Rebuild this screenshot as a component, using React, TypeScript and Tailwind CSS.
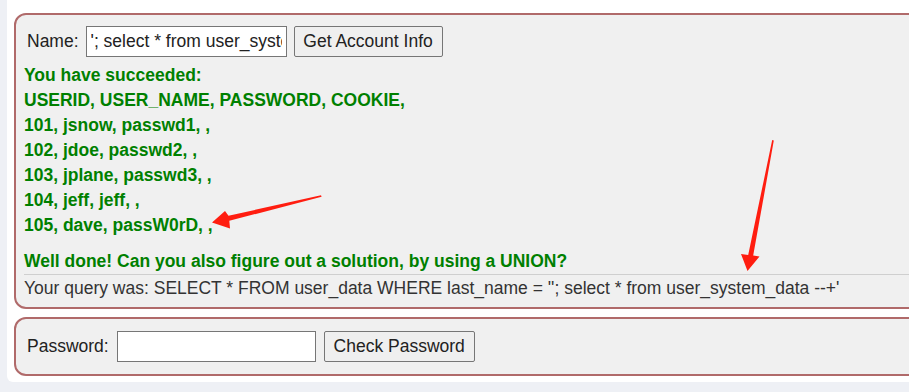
import React from 'react';

const rows = [
  'USERID, USER_NAME, PASSWORD, COOKIE,',
  '101, jsnow, passwd1, ,',
  '102, jdoe, passwd2, ,',
  '103, jplane, passwd3, ,',
  '104, jeff, jeff, ,',
  '105, dave, passW0rD, ,',
];

function Arrows() {
  return (
    <svg
      className="pointer-events-none absolute left-0 top-0"
      width={909}
      height={392}
      viewBox="0 0 909 392"
    >
      <polygon
        fill="#ff1d10"
        points="321,195.2 228.5,215.8 225,211 212,222.5 230,228.5 229.3,220.8 321.6,196.8"
      />
      <polygon
        fill="#ff1d10"
        points="772.2,140 773.8,140.4 753.2,255.6 759.5,256.5 747.5,271 741,254 748.2,255"
      />
    </svg>
  );
}

export default function App() {
  return (
    <div className="relative h-[392px] w-[909px] overflow-hidden bg-[#eef0f5] pl-[7px] font-['Liberation_Sans',Arial,sans-serif] text-[17.5px] text-[#222]">
      <div className="w-[1000px] rounded-bl-[6px] bg-white pb-[6px] pl-[7px] pt-[13px]">
        <div className="h-[296px] rounded-[12px] border-2 border-[#b06a6a] bg-[#f0f0f0] pl-[8px] pt-[11px]">
          <form className="flex items-center" onSubmit={(e) => e.preventDefault()}>
            <label htmlFor="name" className="ml-[3px] mr-[7px] leading-none">
              Name:
            </label>
            <input
              id="name"
              type="text"
              readOnly
              value="'; select * from user_system_data --+'"
              className="h-[31px] w-[201px] border border-[#767676] bg-white px-[4px] text-[17.5px] text-[#222] outline-none"
            />
            <button
              type="button"
              className="ml-[7px] h-[31px] w-[149px] rounded-[2px] border border-[#767676] bg-[#efefef] text-[17.5px] text-[#222]"
            >
              Get Account Info
            </button>
          </form>
          <div className="mt-[6px] font-bold leading-[25px] text-[#008000]">
            <p>You have succeeded:</p>
            {rows.map((r) => (
              <p key={r}>{r}</p>
            ))}
            <p className="mt-[11px]">Well done! Can you also figure out a solution, by using a UNION?</p>
          </div>
          <div className="h-px bg-[#cfcfcf]" />
          <p className="mt-px leading-[25px] text-[#333]">
            Your query was: SELECT * FROM user_data WHERE last_name = ''; select * from user_system_data --+'
          </p>
        </div>
        <div className="mt-[8px] flex h-[59px] items-center rounded-[12px] border-2 border-[#b06a6a] bg-[#f0f0f0] pl-[11px]">
          <label htmlFor="pw" className="mr-[8px]">
            Password:
          </label>
          <input
            id="pw"
            type="password"
            className="h-[31px] w-[199px] border border-[#767676] bg-white px-[4px] outline-none"
          />
          <button
            type="button"
            className="ml-[8px] h-[31px] w-[151px] rounded-[2px] border border-[#767676] bg-[#efefef] text-[17.5px] text-[#222]"
          >
            Check Password
          </button>
        </div>
      </div>
      <Arrows />
    </div>
  );
}
